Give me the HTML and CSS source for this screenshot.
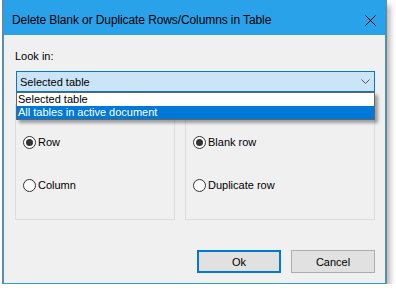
FILE: index.html
```html
<!DOCTYPE html>
<html lang="en">
<head>
    <meta charset="UTF-8">
    <title>Delete Blank or Duplicate Rows/Columns in Table</title>
    <link rel="stylesheet" href="styles.css">
</head>
<body>
    <div class="window">
        <div class="titlebar">
            <span class="title">Delete Blank or Duplicate Rows/Columns in Table</span>
            <svg class="close" width="11" height="11" viewBox="0 0 11 11">
                <path d="M0.5 0.5 L10.5 10.5 M10.5 0.5 L0.5 10.5" stroke="#000" stroke-width="1" fill="none"/>
            </svg>
        </div>

        <div class="content">
            <div class="label">Look in:</div>
            <div class="combo">
                <span>Selected table</span>
                <svg class="chevron" width="9" height="5" viewBox="0 0 9 5">
                    <path d="M0.5 0.5 L4.5 4.5 L8.5 0.5" stroke="#555" stroke-width="1" fill="none"/>
                </svg>
                <ul class="dropdown">
                    <li>Selected table</li>
                    <li class="selected">All tables in active document</li>
                </ul>
            </div>

            <div class="groups">
                <div class="group">
                    <div class="radio"><span class="circle checked"><span></span></span>Row</div>
                    <div class="radio"><span class="circle"></span>Column</div>
                </div>
                <div class="group">
                    <div class="radio"><span class="circle checked"><span></span></span>Blank row</div>
                    <div class="radio"><span class="circle"></span>Duplicate row</div>
                </div>
            </div>

            <div class="buttons">
                <button class="btn default">Ok</button>
                <button class="btn">Cancel</button>
            </div>
        </div>
    </div>
</body>
</html>
```

FILE: styles.css
```css
* {
    margin: 0;
    padding: 0;
    box-sizing: border-box;
    font-family: "Liberation Sans", Arial, sans-serif;
}

body {
    background: #fff;
    color: #000;
    font-size: 11px;
}

/* Window frame */
.window {
    margin-left: 3px;
    width: 383px;
    height: 284px;
    background: #f0f0f0;
    border: 1px solid #2a9de6;
    border-top: 0;
    box-shadow: 0 0 0 1px #808080, 4px 5px 6px rgba(0, 0, 0, 0.3);
    display: flex;
    flex-direction: column;
}

.titlebar {
    height: 35px;
    padding: 5px 9px 0 8px;
    background: #2aa2ea;
    display: flex;
    align-items: center;
}

.title {
    font-size: 12px;
    letter-spacing: -0.1px;
}

.close {
    margin-left: auto;
}

/* Body */
.content {
    padding: 15px 10px 0 11px;
}

.label {
    line-height: 13px;
}

.combo {
    position: relative;
    margin: 8px 0 0 1px;
    height: 21px;
    padding: 0 4px 0 3px;
    background: #cce4f7;
    border: 1px solid #0078d7;
    display: flex;
    align-items: center;
    justify-content: space-between;
}

.dropdown {
    position: absolute;
    top: 20px;
    left: -1px;
    right: -1px;
    list-style: none;
    background: #fff;
    border: 1px solid #646464;
    box-shadow: 3px 3px 3px rgba(0, 0, 0, 0.35);
}

.dropdown li {
    height: 13px;
    line-height: 13px;
    padding-left: 1px;
}

.dropdown li.selected {
    background: #0078d7;
    color: #fff;
}

/* Option groups */
.groups {
    margin-top: 12px;
    display: grid;
    grid-template-columns: 160px 190px;
    gap: 10px;
}

.group {
    height: 116px;
    border: 1px solid #dcdcdc;
    padding: 30px 0 0 7px;
    display: flex;
    flex-direction: column;
    gap: 29px;
}

.radio {
    height: 14px;
    display: flex;
    align-items: center;
    gap: 2px;
}

.circle {
    width: 13px;
    height: 13px;
    border: 1px solid #333;
    border-radius: 50%;
    background: #fff;
    display: grid;
    place-items: center;
}

.circle.checked span {
    width: 7px;
    height: 7px;
    border-radius: 50%;
    background: #333;
}

/* Buttons */
.buttons {
    margin-top: 30px;
    display: flex;
    justify-content: flex-end;
    gap: 10px;
}

.btn {
    width: 84px;
    height: 23px;
    font-size: 11px;
    background: #e1e1e1;
    border: 1px solid #adadad;
    color: #000;
}

.btn.default {
    border: 2px solid #0078d7;
}
```
